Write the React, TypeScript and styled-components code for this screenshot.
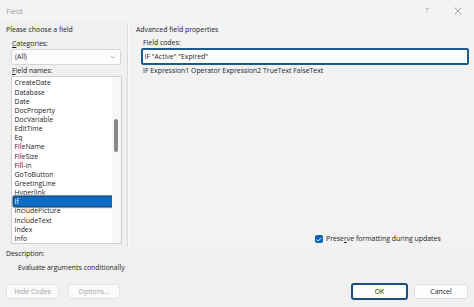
import styled, { createGlobalStyle } from 'styled-components';

const GlobalStyle = createGlobalStyle`
  html, body {
    margin: 0;
    padding: 0;
    background: #f0f0f0;
    overflow: hidden;
  }
  * {
    box-sizing: border-box;
  }
`;

const FIELD_NAMES = [
  'CreateDate',
  'Database',
  'Date',
  'DocProperty',
  'DocVariable',
  'EditTime',
  'Eq',
  'FileName',
  'FileSize',
  'Fill-in',
  'GoToButton',
  'GreetingLine',
  'Hyperlink',
  'If',
  'IncludePicture',
  'IncludeText',
  'Index',
  'Info',
];

function App() {
  return (
    <Dialog>
      <GlobalStyle />
      <TitleBar>
        <Title>Field</Title>
        <TitleButton $gapRight={11}>?</TitleButton>
        <TitleButton>
          <svg width="8" height="8" viewBox="0 0 8 8">
            <path d="M0.5 0.5 L7.5 7.5 M7.5 0.5 L0.5 7.5" stroke="#8c8c8c" strokeWidth="0.8" />
          </svg>
        </TitleButton>
      </TitleBar>

      <Main>
        <LeftPane>
          <Heading>Please choose a field</Heading>
          <FieldLabel $top={4.5}>
            <u>C</u>ategories:
          </FieldLabel>
          <Select>
            <span>(All)</span>
            <svg width="6" height="4" viewBox="0 0 6 4">
              <path d="M0.5 0.5 L3 3 L5.5 0.5" stroke="#9a9a9a" strokeWidth="0.7" fill="none" />
            </svg>
          </Select>
          <FieldLabel $top={1}>
            <u>F</u>ield names:
          </FieldLabel>
          <ListBox>
            <Items>
              {FIELD_NAMES.map((name) => (
                <Item key={name} $selected={name === 'If'}>
                  {name}
                </Item>
              ))}
            </Items>
            <ScrollTrack>
              <ScrollThumb />
            </ScrollTrack>
          </ListBox>
        </LeftPane>

        <Divider />

        <RightPane>
          <Heading>Advanced field properties</Heading>
          <CodesLabel>Field codes:</CodesLabel>
          <CodesInput>IF "Active" "Expired"</CodesInput>
          <Hint>IF Expression1 Operator Expression2 TrueText FalseText</Hint>
          <CheckRow>
            <CheckBox>
              <svg width="6" height="5" viewBox="0 0 6 5">
                <path d="M0.6 2.6 L2.2 4 L5.4 0.8" stroke="#fff" strokeWidth="0.9" fill="none" />
              </svg>
            </CheckBox>
            <span>
              Prese<u>r</u>ve formatting during updates
            </span>
          </CheckRow>
        </RightPane>
      </Main>

      <Description>
        <DescLabel>Description:</DescLabel>
        <DescText>Evaluate arguments conditionally</DescText>
      </Description>

      <Footer>
        <ButtonGroup>
          <Button $width={53} disabled>
            Hide <u>C</u>odes
          </Button>
          <Button $width={52} disabled>
            <u>O</u>ptions...
          </Button>
        </ButtonGroup>
        <ButtonGroup $gap={6}>
          <Button $width={57} $primary>
            OK
          </Button>
          <Button $width={54}>Cancel</Button>
        </ButtonGroup>
      </Footer>
    </Dialog>
  );
}

export default App;

const Dialog = styled.div`
  width: 474px;
  height: 307px;
  display: flex;
  flex-direction: column;
  background: #f0f0f0;
  font-family: 'Open Sans', 'Noto Sans', sans-serif;
  font-size: 6.9px;
  line-height: 10px;
  color: #1b1b1b;

  u {
    text-decoration-thickness: 0.6px;
    text-underline-offset: 1px;
  }
`;

const TitleBar = styled.div`
  height: 22px;
  display: flex;
  align-items: center;
  padding: 0 6px;
  background: #f3f3f3;
  color: #9b9b9b;
  font-size: 7.6px;
`;

const Title = styled.div`
  flex: 1;
`;

const TitleButton = styled.div<{ $gapRight?: number }>`
  width: 20px;
  display: flex;
  justify-content: center;
  align-items: center;
  color: #a0a0a0;
  font-size: 7px;
  margin-right: ${(p) => p.$gapRight ?? 0}px;
`;

const Main = styled.div`
  height: 225px;
  display: flex;
`;

const LeftPane = styled.div`
  width: 127px;
  padding: 2.5px 0 0 6px;
  display: flex;
  flex-direction: column;
`;

const Heading = styled.div`
  line-height: 10px;
  white-space: nowrap;
`;

const FieldLabel = styled.div<{ $top: number }>`
  margin: ${(p) => p.$top}px 0 0 6px;
  line-height: 10px;
`;

const Select = styled.div`
  margin-left: 5px;
  width: 110px;
  height: 16px;
  display: flex;
  align-items: center;
  justify-content: space-between;
  padding: 0 4px 0 3px;
  background: #fdfdfd;
  border: 1px solid #d6d6d6;
  border-radius: 2px;
`;

const ListBox = styled.div`
  margin-left: 5px;
  width: 111px;
  height: 168px;
  display: flex;
  background: #ffffff;
  border: 1px solid #cfcfcf;
`;

const Items = styled.div`
  flex: 1;
  padding: 1.4px 0 0 2px;
  overflow: hidden;
`;

const Item = styled.div<{ $selected?: boolean }>`
  height: 9.15px;
  line-height: 9.15px;
  padding-left: 0.5px;
  white-space: nowrap;
  position: relative;
  z-index: ${(p) => (p.$selected ? 1 : 0)};
  background: ${(p) => (p.$selected ? '#0a6cc6' : 'transparent')};
  color: ${(p) => (p.$selected ? '#ffffff' : '#1b1b1b')};
  border-radius: ${(p) => (p.$selected ? '1px' : '0')};
  box-shadow: ${(p) => (p.$selected ? '0 0 0 1.5px #1d4d76, 0 0 0 2.5px #cfe0ef' : 'none')};
`;

const ScrollTrack = styled.div`
  width: 9px;
  background: #f7f7f7;
  padding: 42px 0 0 2px;
`;

const ScrollThumb = styled.div`
  width: 3.5px;
  height: 33px;
  border-radius: 2px;
  background: #878787;
`;

const Divider = styled.div`
  width: 2px;
  margin-top: 2px;
  border-left: 1px solid #dadada;
  border-right: 1px solid #fafafa;
`;

const RightPane = styled.div`
  flex: 1;
  padding: 2.5px 5px 0 7px;
  display: flex;
  flex-direction: column;
  background: #f2f2f2;
`;

const CodesLabel = styled.div`
  margin: 3.5px 0 0 7px;
  line-height: 10px;
`;

const CodesInput = styled.div`
  margin: 0 0 0 5px;
  height: 17px;
  display: flex;
  align-items: center;
  padding-left: 1.5px;
  background: #ffffff;
  border: 2px solid #1c5b8c;
  border-radius: 2px;
`;

const Hint = styled.div`
  margin: 1px 0 0 7px;
  line-height: 10px;
  white-space: nowrap;
`;

const CheckRow = styled.div`
  margin: auto 0 1px 179px;
  height: 14px;
  display: flex;
  align-items: center;
  gap: 3px;
  white-space: nowrap;
`;

const CheckBox = styled.div`
  width: 8px;
  height: 8px;
  border-radius: 2px;
  background: #0a63b8;
  display: flex;
  justify-content: center;
  align-items: center;
`;

const Description = styled.div`
  padding: 2px 0 0 6px;
  height: 36px;
`;

const DescLabel = styled.div`
  line-height: 10px;
`;

const DescText = styled.div`
  margin: 4px 0 0 12px;
  line-height: 10px;
`;

const Footer = styled.div`
  height: 17px;
  display: flex;
  justify-content: space-between;
  align-items: center;
  padding: 0 6px;
`;

const ButtonGroup = styled.div<{ $gap?: number }>`
  display: flex;
  align-items: center;
  gap: ${(p) => p.$gap ?? 9}px;
`;

const Button = styled.button<{ $width: number; $primary?: boolean }>`
  width: ${(p) => p.$width}px;
  height: ${(p) => (p.$primary ? 17 : 15)}px;
  padding: 0;
  font-family: inherit;
  font-size: 6.9px;
  color: #1b1b1b;
  background: #fdfdfd;
  border: ${(p) => (p.$primary ? '2px solid #1b4f7d' : '1px solid #dcdcdc')};
  border-radius: 3px;

  &:disabled {
    color: #a3a3a3;
    background: #fbfbfb;
    border-color: #e3e3e3;
  }

  u {
    text-decoration: none;
  }
`;
